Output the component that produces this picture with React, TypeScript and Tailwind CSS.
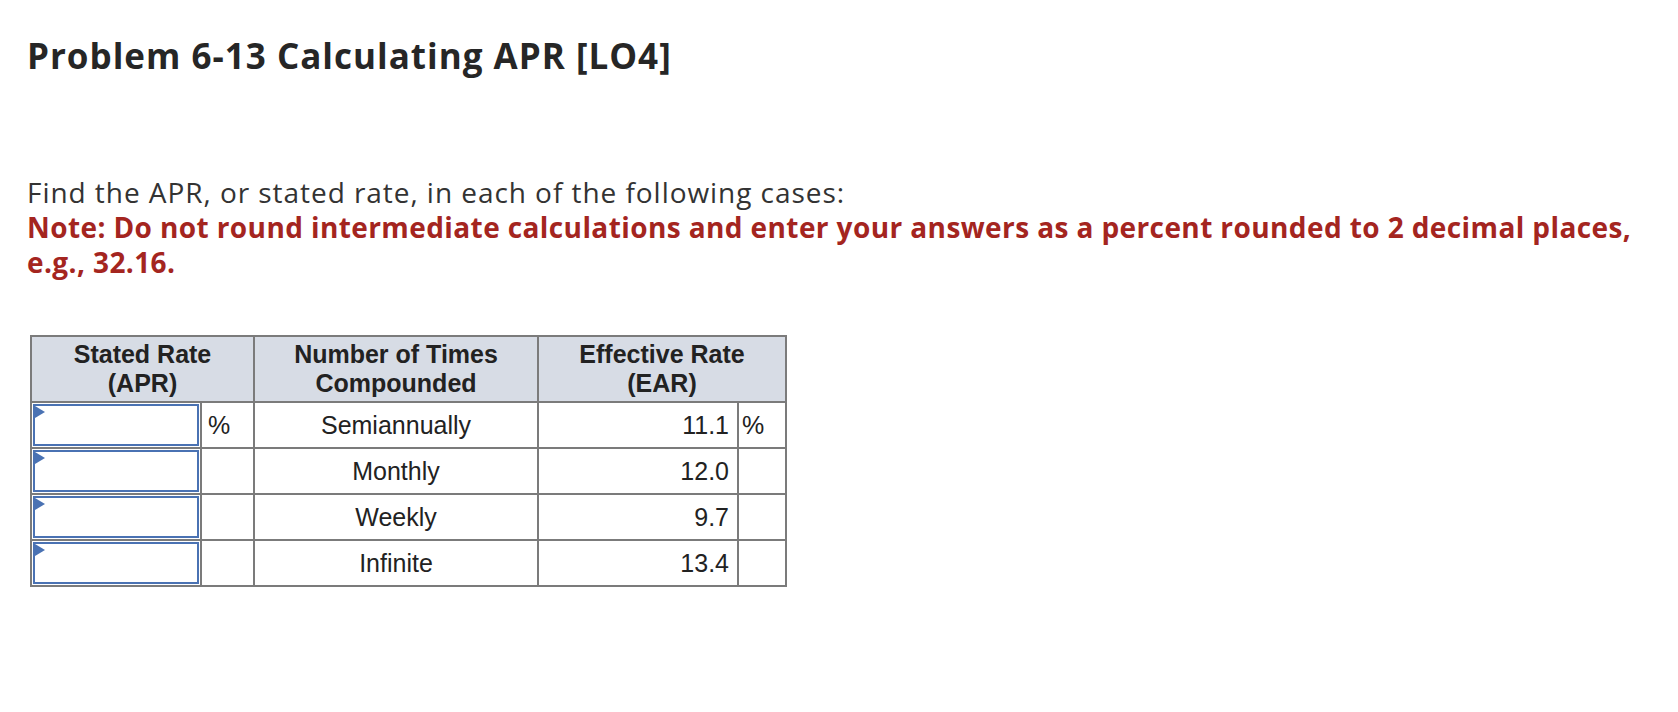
import React from "react";

interface Row {
  label: string;
  ear: string;
  showPercent: boolean;
}

const rows: Row[] = [
  { label: "Semiannually", ear: "11.1", showPercent: true },
  { label: "Monthly", ear: "12.0", showPercent: false },
  { label: "Weekly", ear: "9.7", showPercent: false },
  { label: "Infinite", ear: "13.4", showPercent: false },
];

const cell = "border-2 border-[#7b7b7b] p-0";

export default function App() {
  return (
    <div className="min-h-screen bg-white pl-[27px] pt-[34px] text-[#2a2a2a]">
      {/* Title */}
      <h1 className="font-['Open_Sans',sans-serif] text-[35px] font-bold leading-[44px] tracking-[1px] text-[#262626]">
        Problem 6-13 Calculating APR [LO4]
      </h1>

      {/* Instructions */}
      <div className="mt-[97px] font-['Open_Sans',sans-serif] text-[28px] leading-[35px]">
        <p className="tracking-[0.95px] text-[#333333]">
          Find the APR, or stated rate, in each of the following cases:
        </p>
        <p className="font-bold tracking-[0.4px] text-[#a4251f]">
          Note: Do not round intermediate calculations and enter your answers as a percent rounded to 2 decimal places,
          <br />
          e.g., 32.16.
        </p>
      </div>

      {/* Answer table */}
      <table className="mt-[55px] ml-[3px] w-[755px] table-fixed border-collapse font-['Liberation_Sans',Arial,sans-serif] text-[25px] text-[#222222]">
        <colgroup>
          <col className="w-[170px]" />
          <col className="w-[53px]" />
          <col className="w-[284px]" />
          <col className="w-[200px]" />
          <col className="w-[48px]" />
        </colgroup>
        <thead>
          <tr className="bg-[#d7dce5]">
            <th colSpan={2} className={`${cell} py-[3px] text-center font-bold leading-[29px]`}>
              Stated Rate
              <br />
              (APR)
            </th>
            <th className={`${cell} py-[3px] text-center font-bold leading-[29px]`}>
              Number of Times
              <br />
              Compounded
            </th>
            <th colSpan={2} className={`${cell} py-[3px] text-center font-bold leading-[29px]`}>
              Effective Rate
              <br />
              (EAR)
            </th>
          </tr>
        </thead>
        <tbody>
          {rows.map((row) => (
            <tr key={row.label}>
              <td className={cell}>
                <div className="relative m-[1px] h-[42px] border-2 border-[#4a72b3] bg-white">
                  <input
                    type="text"
                    className="h-full w-full bg-transparent px-2 outline-none"
                  />
                  <span className="absolute left-0 top-0 h-0 w-0 border-y-[6.5px] border-l-[10px] border-y-transparent border-l-[#4a72b3]" />
                </div>
              </td>
              <td className={`${cell} pl-[6px] leading-[44px]`}>
                {row.showPercent ? "%" : ""}
              </td>
              <td className={`${cell} text-center leading-[44px]`}>{row.label}</td>
              <td className={`${cell} pr-[8px] text-right leading-[44px]`}>{row.ear}</td>
              <td className={`${cell} pl-[3px] leading-[44px]`}>
                {row.showPercent ? "%" : ""}
              </td>
            </tr>
          ))}
        </tbody>
      </table>
    </div>
  );
}
